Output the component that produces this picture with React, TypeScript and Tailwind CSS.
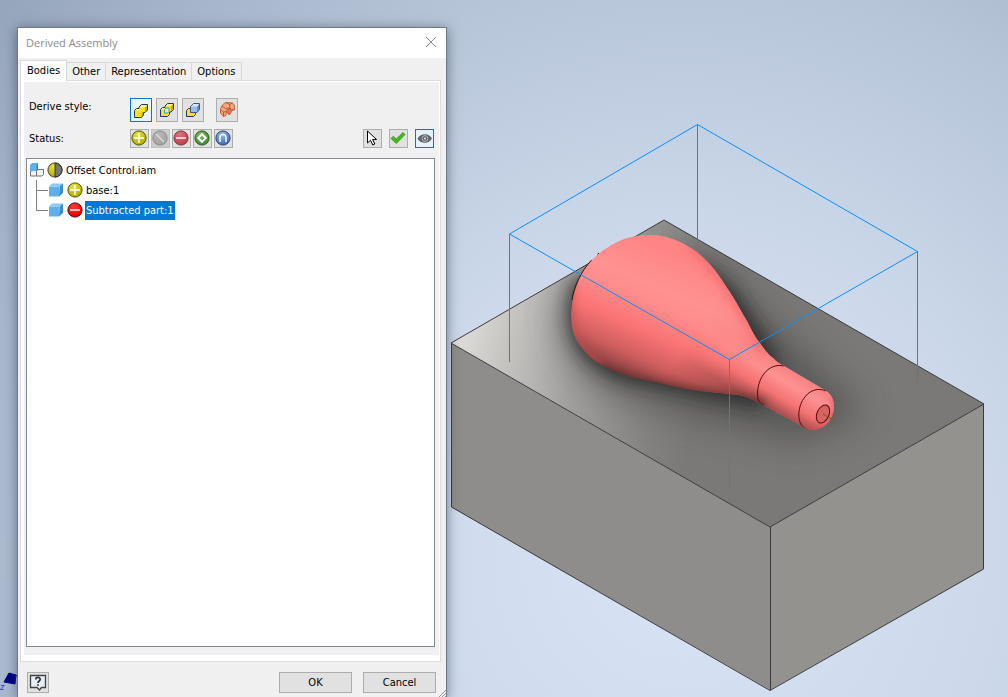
import { useState } from 'react';
import type { ReactNode } from 'react';
import clsx from 'clsx';

const TABS = ['Bodies', 'Other', 'Representation', 'Options'];

const BOTTLE =
  'M650 235 C660 235 667 237 673 239 C683 243 690 247 697 252 C706 260 711 265 717 273 C724 283 728 289 733 297 C738 305 742 313 747 321 C752 331 755 337 760 343 C764 349 768 354 773 358 C777 362 780 364 784 366 L823 389 C829 392 832 396 833 400 C835 406 834 411 832 416 C829 423 823 430 812 430 C807 430 803 427 798 424 L763 405 C757 401 756 401 753 400 C746 396 740 395 730 394 L700 391 C685 389 671 386 657 382 C644 380 634 378 623 374 C614 371 607 368 600 364 C592 359 587 355 582 348 C575 339 573 334 572 325 C571 317 571 311 572 306 C573 297 574 292 577 285 C580 277 583 271 588 265 C594 257 600 252 607 248 C614 243 620 240 627 238 C635 236 642 235 650 235Z';

export default function App() {
  const [tab, setTab] = useState('Bodies');

  return (
    <main className="relative flex min-h-screen overflow-hidden bg-[#c8d5e8] pl-[17px] pt-[27px] font-['DejaVu_Sans_Condensed','Noto_Sans',sans-serif] text-[11px] text-black">
      <Viewport />

      <section
        role="dialog"
        aria-label="Derived Assembly"
        className="relative flex w-[430px] shrink-0 flex-col border border-b-0 border-[#717986] bg-[#f0f0f0] shadow-[0_2px_12px_rgba(30,40,60,0.55)]"
      >
        <header className="flex h-[30px] items-center justify-between bg-white pl-2 pr-[9px]">
          <h1 className="font-['Open_Sans','Noto_Sans',sans-serif] text-[11px] text-[#8c8c8c]">Derived Assembly</h1>
          <button aria-label="Close">
            <svg width="12" height="12" viewBox="0 0 12 12" stroke="#8d8d8d">
              <path d="M1 0l10 10M11 0L1 10" />
            </svg>
          </button>
        </header>

        <div role="tablist" className="z-10 -mb-px flex h-[23px] items-end pl-[2px]">
          {TABS.map((name) => (
            <button
              key={name}
              role="tab"
              aria-selected={tab === name}
              onClick={() => setTab(name)}
              className={clsx(
                'border-t border-r border-[#d9d9d9] leading-4',
                tab === name ? 'h-[21px] border-l bg-white px-[6px]' : 'mb-px h-[18px] px-[5px] pt-px',
              )}
            >
              {name}
            </button>
          ))}
        </div>

        <div className="ml-[2px] mr-[5px] flex flex-1 flex-col border border-[#dcdcdc] bg-white pb-[6px] pl-[3px] pr-px pt-px">
          <div className="flex flex-1 flex-col bg-[#f0f0f0] pb-2 pl-[2px] pr-1 pt-4">
            <div className="flex items-start pl-[3px]">
              <span className="w-[101px] leading-[18px]">Derive style:</span>
              <div className="flex gap-[4px]">
                <StyleButton label="Merge out seams" active><MergedIcon /></StyleButton>
                <StyleButton label="Keep seams"><SeamsIcon /></StyleButton>
                <StyleButton label="Keep each solid"><SolidsIcon /></StyleButton>
              </div>
              <div className="ml-[12px]">
                <StyleButton label="Surface composite"><SurfaceIcon /></StyleButton>
              </div>
            </div>

            <div className="mt-[7px] flex items-center pl-[3px]">
              <span className="w-[101px] pt-px leading-[18px]">Status:</span>
              <div className="flex gap-[2px]">
                <ToolButton label="Include"><StatusIcon kind="plus" /></ToolButton>
                <ToolButton label="Exclude" disabled><StatusIcon kind="none" /></ToolButton>
                <ToolButton label="Subtract"><StatusIcon kind="minusSoft" /></ToolButton>
                <ToolButton label="Bounding box"><StatusIcon kind="box" /></ToolButton>
                <ToolButton label="Intersect"><StatusIcon kind="intersect" /></ToolButton>
              </div>
              <div className="ml-auto mr-px flex gap-[7px]">
                <ToolButton label="Select"><CursorIcon /></ToolButton>
                <ToolButton label="Accept"><CheckIcon /></ToolButton>
                <ToolButton label="Show" active><EyeIcon /></ToolButton>
              </div>
            </div>

            <ul role="tree" className="mt-[10px] flex-1 border border-[#828790] bg-white pl-[2px] pt-px leading-5">
              <li role="treeitem" className="flex h-5 items-center">
                <AssemblyIcon />
                <StatusIcon kind="half" className="ml-[2px]" />
                <span className="ml-[3px] pt-px">Offset Control.iam</span>
              </li>
              <TreeRow label="base:1" kind="plus" />
              <TreeRow label="Subtracted part:1" kind="minus" last selected />
            </ul>
          </div>
        </div>

        <footer className="mb-1 mt-[10px] flex h-[21px] items-stretch gap-[11px] pl-[9px] pr-[10px]">
          <button aria-label="Help" className="mr-auto flex w-[22px] items-center justify-center border border-[#adadad] bg-[#e1e1e1]">
            <HelpIcon />
          </button>
          <button className="w-[73px] border border-[#adadad] bg-[#e1e1e1] pt-px">OK</button>
          <button className="w-[73px] border border-[#adadad] bg-[#e1e1e1] pt-px">Cancel</button>
        </footer>
        <svg className="absolute bottom-0 right-0" width="8" height="8" viewBox="0 0 8 8" stroke="#9a9a9a">
          <path d="M1 8L8 1M4 8l4-4M7 8l1-1" />
        </svg>
      </section>
    </main>
  );
}

function StyleButton({ label, active, children }: { label: string, active?: boolean, children: ReactNode }) {
  return (
    <button
      aria-label={label}
      className={clsx(
        'flex h-6 w-[22px] items-center justify-center border',
        active ? 'border-[#0078d7] bg-[#e8f3fc]' : 'border-[#adadad] bg-[#e1e1e1]',
      )}
    >
      {children}
    </button>
  );
}

function ToolButton({ label, active, disabled, children }: { label: string, active?: boolean, disabled?: boolean, children: ReactNode }) {
  return (
    <button
      aria-label={label}
      disabled={disabled}
      className={clsx(
        'flex size-[19px] items-start justify-start border',
        active && 'border-[#0078d7] bg-[#e5f1fb]',
        disabled && 'border-[#bfbfbf] bg-[#cccccc]',
        !active && !disabled && 'border-[#adadad] bg-[#e1e1e1]',
      )}
    >
      {children}
    </button>
  );
}

function TreeRow({ label, kind, last, selected }: { label: string, kind: string, last?: boolean, selected?: boolean }) {
  return (
    <li role="treeitem" aria-selected={!!selected} className="flex h-5 items-center">
      <svg width="19" height="20" viewBox="0 0 19 20" stroke="#808080" className="shrink-0">
        <path d={last ? 'M7.5 0V10.5H19' : 'M7.5 0V20M7.5 10.5H19'} fill="none" />
      </svg>
      <CubeIcon />
      <StatusIcon kind={kind} className="ml-[3px]" />
      <span className={clsx('ml-[2px] h-[19px] px-px', selected && 'bg-[#0078d7] text-white')}>{label}</span>
    </li>
  );
}

const STATUS_COLORS: Record<string, [string, string, string]> = {
  plus: ['#e6e23a', '#b0ab00', '#55550f'],
  none: ['#b8b8b8', '#a3a3a3', '#8a8a8a'],
  minusSoft: ['#dc7478', '#bd4048', '#7a3a3e'],
  minus: ['#ff3a30', '#e00000', '#4a0a0a'],
  box: ['#7cb864', '#3f8a2c', '#2c5a22'],
  intersect: ['#9abce6', '#3c6cb4', '#2c4878'],
  half: ['#e6e23a', '#b5b000', '#3c3c2c'],
};

function StatusIcon({ kind, className }: { kind: string, className?: string }) {
  const [light, base, edge] = STATUS_COLORS[kind];
  return (
    <svg width="16" height="16" viewBox="0 0 16 16" className={clsx('shrink-0', className)}>
      <defs>
        <radialGradient id={`status-${kind}`} cx="0.4" cy="0.25" r="0.75">
          <stop offset="0" stopColor={light} />
          <stop offset="1" stopColor={base} />
        </radialGradient>
      </defs>
      <circle cx="8" cy="8" r="7.1" fill={`url(#status-${kind})`} stroke={edge} strokeWidth="1" />
      {kind === 'half' && <path d="M8 1a7 7 0 0 1 0 14z" fill="#777" stroke="#222" strokeWidth="0.8" />}
      <g stroke="#fff" strokeWidth="1.4" fill="none">
        {kind === 'plus' && <path d="M8 3v10M3 8h10" />}
        {kind === 'none' && <path d="M4 4l8 8" stroke="#ddd" strokeWidth="1.2" />}
        {(kind === 'minus' || kind === 'minusSoft') && <path d="M3 8h10" />}
        {kind === 'box' && <path d="M8 4.2L11.8 8 8 11.8 4.2 8z" strokeWidth="2" />}
        {kind === 'intersect' && <path d="M5 12V7.5a3 3 0 0 1 6 0V12" />}
      </g>
    </svg>
  );
}

function CubeIcon() {
  return (
    <svg width="16" height="16" viewBox="0 0 16 16" className="shrink-0">
      <path d="M1 4.500h10V14.500H1z" fill="#5fb0ea" />
      <path d="M1 4.500L4 1.500h11L11.500 4.500z" fill="#8ccaf4" />
      <path d="M11.500 4.500L15 1.500v9.500L11 14.500z" fill="#3a8ecc" />
    </svg>
  );
}

function AssemblyIcon() {
  return (
    <svg width="16" height="16" viewBox="0 0 16 16" className="shrink-0">
      <path d="M1.500 9.500L3 8.500h4.500V14H1.500z" fill="#f2f2f2" stroke="#707070" />
      <path d="M7.500 9L9 7.500h5.500v5L13 14H7.500z" fill="#f2f2f2" stroke="#707070" />
      <path d="M1 3l2-2h6v6.500L7.500 9H1z" fill="#5fb0ea" />
      <path d="M7.500 3L9 1v6.500L7.500 9z" fill="#3484bc" />
    </svg>
  );
}

function MergedIcon() {
  return (
    <svg width="16" height="16" viewBox="0 0 16 16">
      <path d="M1.500 8.500l2-2H6V5l2.500-2.500h6V8L12 10.500h-1.500V13L8.500 15.500h-7z" fill="#ffe116" />
      <path d="M2 8.500L4 7h2.500V5L9 3h5l-2 2.500H7v3z" fill="#fff29a" />
      <path d="M14 3.500V8l-2 2V5.500zM10 10v3l-1.500 2v-5z" fill="#d8a800" />
      <path d="M1.500 8.500l2-2H6V5l2.500-2.500h6V8L12 10.500h-1.500V13L8.500 15.500h-7z" fill="none" stroke="#22355f" />
    </svg>
  );
}

function SeamsIcon() {
  return (
    <svg width="16" height="16" viewBox="0 0 16 16">
      <path d="M1.500 7.500l2-2H6V4l2.500-2.500h6v6L12 10h-1.500v2.500L8.500 14.500h-7z" fill="#ffe116" stroke="#22355f" />
      <path d="M7 4l2-2h5l-2 2zM2 7.500L4 6h2.500v1.500z" fill="#fff29a" />
      <path d="M14 2.500V7l-2 2V4.500z" fill="#c99a00" />
      <path d="M5.500 7.500l1.500-1.500h3V9.500L8.500 11h-3z" fill="#ffec70" stroke="#2c9ce0" />
    </svg>
  );
}

function SolidsIcon() {
  return (
    <svg width="16" height="16" viewBox="0 0 16 16">
      <path d="M1.500 8.500l2-2h7v6L8.500 14.500h-7z" fill="#ffe116" stroke="#22355f" />
      <path d="M5.500 4.500l3-3h6v6L12 10.500H5.500z" fill="#9cbcec" stroke="#3b568c" />
      <path d="M6 4.500L8.500 2H14l-2 2.500z" fill="#d8e6fb" />
      <path d="M12 5l2-2.500v5L12 10z" fill="#6285c0" />
    </svg>
  );
}

function SurfaceIcon() {
  return (
    <svg width="18" height="18" viewBox="0 0 18 18" stroke="#b8562c" strokeWidth="0.9" strokeLinejoin="round">
      <path d="M2.500 8.500C3 5 5.500 2.500 8 1.500l6.500.5c1.500 1 2 2.500 2 4.500v2l-3 .5-1.500-2C9.500 8 8 10.500 8 14.500L5.500 15.500 2.500 12z" fill="#f4a880" />
      <path d="M2.500 8.500l3 2.500 2.800-.5M5.500 11v4.500M4 5l3.500 2.500 4-.5M8 1.500l3.500 2 3-1.500M11.500 3.500l.5 3.500" fill="none" />
      <path d="M8.300 10.500l3 3.500 2.200-3.500-1.500-3C10.500 7.500 9 9 8.300 10.500z" fill="#dc7a4c" />
      <path d="M13.500 9.500l3-.500" fill="none" />
    </svg>
  );
}

function CursorIcon() {
  return (
    <svg width="17" height="17" viewBox="0 0 17 17">
      <path d="M3.500 1v12l3-2.700 2.300 4.700 2-1-2.200-4.500h4z" fill="#fff" stroke="#000" />
    </svg>
  );
}

function CheckIcon() {
  return (
    <svg width="17" height="17" viewBox="0 0 17 17">
      <path d="M1 8.500l2.300-2.300 3 2.800L13 2.500l2 2-8.700 9z" fill="#45b81a" stroke="#2f9410" strokeWidth="0.800" />
    </svg>
  );
}

function EyeIcon() {
  return (
    <svg width="17" height="17" viewBox="0 0 17 17">
      <path d="M1.500 8.500C3.500 5.500 6 4.300 9 4.300s5 1.200 7 4.200c-2 3.300-4.500 4.300-7 4.300S3.500 12 1.500 8.500z" fill="#606468" />
      <circle cx="9" cy="8.500" r="2.900" fill="#606468" stroke="#b4bcc4" strokeWidth="1" />
      <circle cx="9" cy="8.500" r="1" fill="#eef" />
    </svg>
  );
}

function HelpIcon() {
  return (
    <svg width="18" height="17" viewBox="0 0 18 17">
      <path d="M1.500 1.500h15v12h-4L10.500 16l-2.500-2.500H1.500z" fill="#e9eef2" stroke="#3c434c" strokeWidth="1.300" />
      <path d="M6.800 5.500C6.800 2.800 11.200 2.800 11.200 5.300 11.200 7 9 7 9 9M9 10.200v1.600" fill="none" stroke="#2a3038" strokeWidth="1.700" />
    </svg>
  );
}

// 3D scene behind the dialog
function Viewport() {
  return (
    <svg className="absolute inset-0 size-full" viewBox="0 0 1008 697" preserveAspectRatio="xMinYMin slice">
      <defs>
        <radialGradient id="sky" gradientUnits="userSpaceOnUse" cx="680" cy="560" r="900">
          <stop offset="0" stopColor="#d8e3f5" />
          <stop offset="0.35" stopColor="#cdd9eb" />
          <stop offset="0.65" stopColor="#b7c5d9" />
          <stop offset="1" stopColor="#93a3ba" />
        </radialGradient>
        <linearGradient id="face" gradientUnits="userSpaceOnUse" x1="451" y1="343" x2="700" y2="400">
          <stop offset="0" stopColor="#e2e0dc" />
          <stop offset="0.2" stopColor="#c8c6c3" />
          <stop offset="0.5" stopColor="#a3a19f" />
          <stop offset="0.85" stopColor="#82817f" />
          <stop offset="1" stopColor="#7a7977" />
        </linearGradient>
        <linearGradient id="body" gradientUnits="userSpaceOnUse" x1="698" y1="262" x2="640" y2="392">
          <stop offset="0" stopColor="#ff8484" />
          <stop offset="0.28" stopColor="#ff9292" />
          <stop offset="0.4" stopColor="#ff8c8c" />
          <stop offset="0.6" stopColor="#fa7373" />
          <stop offset="0.78" stopColor="#cf5e5e" />
          <stop offset="0.92" stopColor="#8c4343" />
          <stop offset="1" stopColor="#663232" />
        </linearGradient>
        <linearGradient id="neck" gradientUnits="userSpaceOnUse" x1="806" y1="378" x2="782" y2="418">
          <stop offset="0" stopColor="#f88080" />
          <stop offset="0.3" stopColor="#ff9292" />
          <stop offset="0.65" stopColor="#f47272" />
          <stop offset="1" stopColor="#964747" />
        </linearGradient>
        <linearGradient id="neckFade" gradientUnits="userSpaceOnUse" x1="700" y1="325" x2="768" y2="372">
          <stop offset="0" stopColor="#000" />
          <stop offset="1" stopColor="#fff" />
        </linearGradient>
        <mask id="neckMask"><rect x="500" y="200" width="400" height="300" fill="url(#neckFade)" /></mask>
        <clipPath id="topFace"><path d="M664 220L984 404 770 527 451 343z" /></clipPath>
        <clipPath id="bottle"><path d={BOTTLE} /></clipPath>
        <filter id="soft" x="-50%" y="-50%" width="200%" height="200%"><feGaussianBlur stdDeviation="18" /></filter>
        <filter id="near" x="-50%" y="-50%" width="200%" height="200%"><feGaussianBlur stdDeviation="8" /></filter>
        <filter id="rim" x="-50%" y="-50%" width="200%" height="200%"><feGaussianBlur stdDeviation="4" /></filter>
      </defs>
      <rect width="1008" height="697" fill="url(#sky)" />

      <path d="M451 343L770 527V690L451 507z" fill="#8f8d8b" />
      <path d="M770 527L984 404V569L770 690z" fill="#94928f" />
      <path d="M664 220L984 404 770 527 451 343z" fill="url(#face)" />
      <g clipPath="url(#topFace)">
        <path d="M575 290C555 340 590 385 650 396L800 432 850 410 765 330 700 262z" fill="#4a4a48" stroke="#4a4a48" strokeWidth="16" opacity="0.7" filter="url(#soft)" />
        <path d="M574 280C560 330 575 362 620 380L760 408 778 358 735 290 705 265z" fill="#262625" opacity="0.75" filter="url(#near)" />
      </g>
      <g fill="none" stroke="#3b3b3b">
        <path d="M664 220L984 404 770 527 451 343z" strokeLinejoin="round" />
        <path d="M451.500 343V507L770 690.500 983.500 569V404M770.500 527V690" />
      </g>

      <path d="M697.500 125V260" stroke="#0a8ff5" />
      <path d={BOTTLE} fill="url(#body)" />
      <g clipPath="url(#bottle)">
        <path d={BOTTLE} fill="url(#neck)" mask="url(#neckMask)" />
        <path d="M570 285C566 315 570 345 600 364" fill="none" stroke="#b84c4c" strokeWidth="8" opacity="0.7" filter="url(#rim)" />
        <path d="M600 370C650 390 700 394 765 405" fill="none" stroke="#5a2c2c" strokeWidth="12" opacity="0.75" filter="url(#rim)" />
        <path d="M690 245C720 270 735 300 765 350" fill="none" stroke="#f06464" strokeWidth="8" opacity="0.7" filter="url(#rim)" />
        <path d="M838 395C838 415 828 432 808 434" fill="none" stroke="#c04c4c" strokeWidth="8" opacity="0.7" filter="url(#rim)" />
        <path d="M784 366C768 362 755 380 758 399 759 402 761 404 764 405M826 391C810 384 797 402 799 418 800 425 804 429 808 430" fill="none" stroke="#5a0c0c" />
      </g>
      <ellipse cx="823" cy="414" rx="6" ry="9.500" transform="rotate(24 823 414)" fill="#d66464" stroke="#5a0c0c" />
      <path d="M823 414l12 7" stroke="#8a5a10" />
      <path d="M599 253C583 266 574 285 572 300" fill="none" stroke="#4a0c0c" strokeDasharray="2 8 60" />

      <g fill="none" stroke="#0a8ff5">
        <path d="M509.500 234L697.500 124.500 917.500 251.500 729.500 359.500z" />
        <path d="M509.500 234V362M917.500 251V382M729.500 359V489" />
      </g>

      {/* axis triad, partly under the dialog */}
      <path d="M4 682l5-9 7 2-1 9zM15 676l3-1" fill="#00008c" stroke="#00008c" />
      <text x="0" y="690" fill="#3030f0" fontSize="9" fontStyle="italic">z</text>
    </svg>
  );
}
